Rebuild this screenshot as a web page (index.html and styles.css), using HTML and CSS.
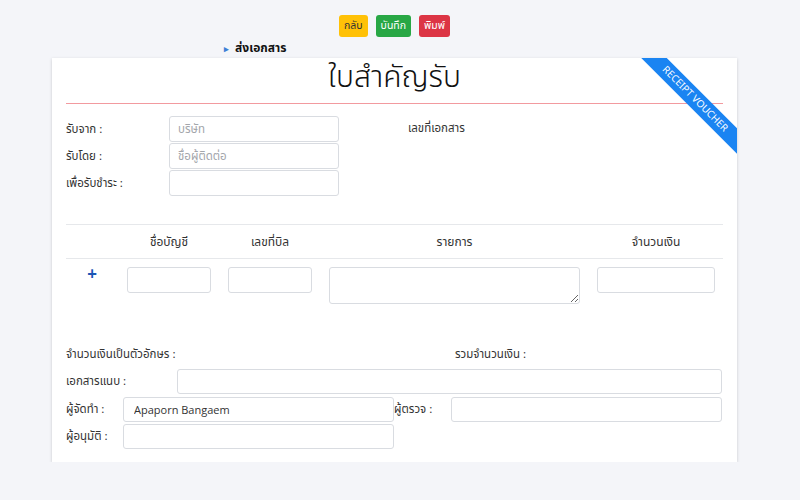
FILE: index.html
```html
<!DOCTYPE html>
<html lang="th">
<head>
    <meta charset="UTF-8">
    <meta name="viewport" content="width=device-width, initial-scale=1.0">
    <title>ใบสำคัญรับ</title>
    <link rel="stylesheet" href="styles.css">
</head>
<body>
    <div class="page">
        <!-- ปุ่มด้านบน -->
        <div class="toolbar">
            <button type="button" class="btn btn-back">กลับ</button>
            <button type="button" class="btn btn-save">บันทึก</button>
            <button type="button" class="btn btn-print">พิมพ์</button>
        </div>
        <div class="crumb"><span class="crumb-arrow">&#9656;</span> ส่งเอกสาร</div>

        <div class="card">
            <div class="ribbon-wrap">
                <div class="ribbon">RECEIPT VOUCHER</div>
            </div>
            <h1 class="title">ใบสำคัญรับ</h1>

            <!-- ข้อมูลผู้รับ -->
            <div class="head-section">
                <div class="head-fields">
                    <label class="lbl">รับจาก :</label>
                    <input type="text" class="field" placeholder="บริษัท">
                    <label class="lbl">รับโดย :</label>
                    <input type="text" class="field" placeholder="ชื่อผู้ติดต่อ">
                    <label class="lbl">เพื่อรับชำระ :</label>
                    <input type="text" class="field">
                </div>
                <div class="doc-no">เลขที่เอกสาร</div>
            </div>

            <!-- รายการ -->
            <div class="items">
                <div class="items-head">
                    <div></div>
                    <div>ชื่อบัญชี</div>
                    <div>เลขที่บิล</div>
                    <div>รายการ</div>
                    <div>จำนวนเงิน</div>
                </div>
                <div class="items-row">
                    <div class="add">+</div>
                    <input type="text" class="field">
                    <input type="text" class="field">
                    <textarea class="field area"></textarea>
                    <input type="text" class="field">
                </div>
            </div>

            <!-- สรุป -->
            <div class="totals">
                <div class="totals-text">จำนวนเงินเป็นตัวอักษร :</div>
                <div>รวมจำนวนเงิน :</div>
            </div>
            <div class="attach-row">
                <label class="lbl top">เอกสารแนบ :</label>
                <input type="text" class="field">
            </div>
            <div class="sign-grid">
                <label class="lbl top">ผู้จัดทำ :</label>
                <input type="text" class="field name" value="Apaporn Bangaem">
                <label class="lbl top">ผู้ตรวจ :</label>
                <input type="text" class="field">
                <label class="lbl top">ผู้อนุมัติ :</label>
                <input type="text" class="field">
            </div>
        </div>
    </div>
</body>
</html>
```

FILE: styles.css
```css
* {
    box-sizing: border-box;
}
body {
    font-family: "Noto Sans Thai", "Noto Sans", sans-serif;
    background-color: #f4f5f9;
    color: #333;
    margin: 0;
    padding: 0;
    font-size: 11.5px;
}
.page {
    width: 685px;
    margin-left: 52px;
    padding-top: 15px;
}
.toolbar {
    display: flex;
    justify-content: center;
    gap: 8px;
}
.btn {
    height: 22px;
    padding: 0 5px;
    border: none;
    border-radius: 3px;
    font-family: inherit;
    font-size: 10.5px;
    color: #fff;
    cursor: pointer;
}
.btn-back {
    background-color: #ffc107;
    color: #333;
}
.btn-save {
    background-color: #28a745;
}
.btn-print {
    background-color: #dc3545;
}
.crumb {
    margin: 3px 0 0 172px;
    font-size: 12px;
    font-weight: bold;
    color: #111;
    line-height: 16px;
}
.crumb-arrow {
    color: #3d7fd6;
    font-size: 9px;
    margin-right: 3px;
}
.card {
    position: relative;
    background-color: #fff;
    box-shadow: 0 1px 3px rgba(0, 0, 0, 0.18);
    padding: 0 14px 13px;
    margin-top: 1px;
}
.ribbon-wrap {
    position: absolute;
    top: 0;
    right: 0;
    width: 100px;
    height: 100px;
    overflow: hidden;
}
.ribbon {
    position: absolute;
    left: -42px;
    top: 32px;
    width: 200px;
    height: 18px;
    line-height: 18px;
    background-color: #1a84f2;
    color: #fff;
    font-size: 10px;
    text-align: center;
    transform: rotate(45deg);
}
.title {
    margin: 0;
    padding-bottom: 5px;
    line-height: 40px;
    text-align: center;
    font-size: 30px;
    font-weight: 300;
    color: #111;
    border-bottom: 1px solid #f29a9f;
}
.head-section {
    display: flex;
    margin-top: 12px;
}
.head-fields {
    display: grid;
    grid-template-columns: 103px 170px;
    row-gap: 1px;
    align-items: center;
}
.lbl {
    color: #333;
}
.lbl.top {
    align-self: start;
    padding-top: 4px;
}
.doc-no {
    margin-left: 69px;
    padding-top: 4px;
}
.field {
    height: 26px;
    border: 1px solid #d9dce1;
    border-radius: 3px;
    padding: 0 8px;
    font-family: inherit;
    font-size: 11.5px;
    color: #333;
    background-color: #fff;
}
.field::placeholder {
    color: #a3a6ab;
}
.items {
    margin-top: 28px;
}
.items-head,
.items-row {
    display: grid;
    grid-template-columns: 44px 84px 84px 251px 118px;
    column-gap: 17px;
}
.items-head {
    height: 35px;
    align-items: center;
    border-top: 1px solid #e6e8eb;
    border-bottom: 1px solid #e6e8eb;
    text-align: center;
    font-size: 12px;
}
.items-row {
    margin-top: 8px;
    align-items: start;
}
.add {
    padding: 0 0 0 8px;
    text-align: center;
    color: #1b56b5;
    font-size: 17px;
    font-weight: bold;
    line-height: 16px;
}
.area {
    height: 37px;
    resize: vertical;
    padding: 4px 8px;
}
.totals {
    display: flex;
    margin-top: 43px;
    line-height: 16px;
}
.totals-text {
    width: 389px;
}
.attach-row {
    display: grid;
    grid-template-columns: 111px 545px;
    margin-top: 6px;
}
.attach-row .field,
.sign-grid .field {
    height: 25px;
}
.sign-grid {
    display: grid;
    grid-template-columns: 57px 271px 57px 271px;
    row-gap: 2px;
    margin-top: 3px;
}
.field.name {
    padding-left: 10px;
    font-family: "Open Sans", sans-serif;
    font-size: 11px;
}
```
